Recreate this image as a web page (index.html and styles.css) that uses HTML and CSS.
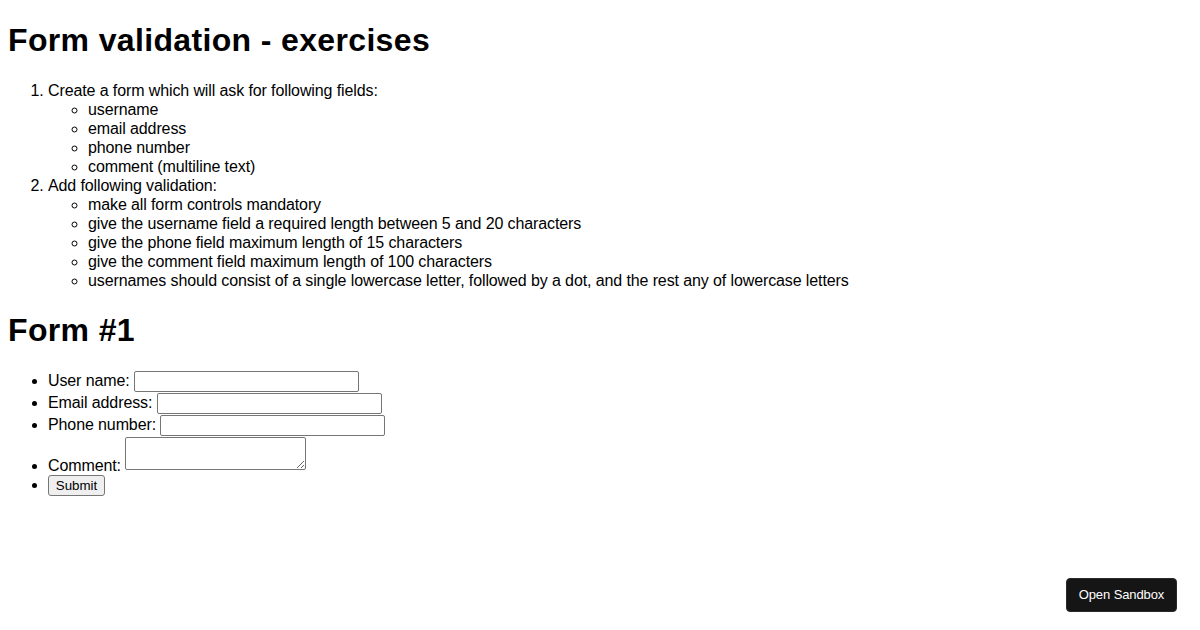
FILE: index.html
```html
<!DOCTYPE html>
<html lang="en">
<head>
<meta charset="utf-8">
<title>Form validation - exercises</title>
<link rel="stylesheet" href="styles.css">
</head>
<body class="page">
<h1 class="title">Form validation - exercises</h1>
<ol class="tasks">
  <li>Create a form which will ask for following fields:
    <ul class="sub">
      <li>username</li>
      <li>email address</li>
      <li>phone number</li>
      <li>comment (multiline text)</li>
    </ul>
  </li>
  <li>Add following validation:
    <ul class="sub">
      <li>make all form controls mandatory</li>
      <li>give the username field a required length between 5 and 20 characters</li>
      <li>give the phone field maximum length of 15 characters</li>
      <li>give the comment field maximum length of 100 characters</li>
      <li>usernames should consist of a single lowercase letter, followed by a dot, and the rest any of lowercase letters</li>
    </ul>
  </li>
</ol>
<h1 class="title">Form #1</h1>
<form class="form">
  <ul class="fields">
    <li>User name: <input class="field" type="text"></li>
    <li>Email address: <input class="field" type="email"></li>
    <li>Phone number: <input class="field" type="tel"></li>
    <li>Comment: <textarea class="area"></textarea></li>
    <li><button class="submit" type="button">Submit</button></li>
  </ul>
</form>
<a class="sandbox" href="#">Open Sandbox</a>
</body>
</html>
```

FILE: styles.css
```css
html {
  margin: 0;
  padding: 0;
}
.page {
  margin: 0;
  padding: 0 8px;
  font-family: "Liberation Sans", Arial, sans-serif;
  font-size: 16px;
  line-height: 19px;
  letter-spacing: -0.11px;
  color: #000;
  background: #fff;
}
.title {
  font-size: 32px;
  line-height: 38px;
  letter-spacing: 0.35px;
  font-weight: bold;
  margin: 21.44px 0;
}
.tasks {
  margin: 16px 0;
  padding-left: 40px;
}
.sub {
  list-style: circle;
  margin: 0;
  padding-left: 40px;
}
.form {
  margin: 0;
}
.fields {
  list-style: disc;
  margin: 16px 0;
  padding-left: 40px;
}
.field {
  font-family: "Liberation Sans", Arial, sans-serif;
  font-size: 13.33px;
  box-sizing: border-box;
  width: 225px;
  height: 21px;
  margin: 0 0 1px;
  border: 1px solid #767676;
  border-radius: 2px;
  padding: 1px 2px;
}
.area {
  box-sizing: border-box;
  width: 181px;
  height: 33px;
  margin: 0 0 1px;
  border: 1px solid #767676;
  border-radius: 2px;
}
.submit {
  font-family: "Liberation Sans", Arial, sans-serif;
  font-size: 13.33px;
  letter-spacing: 0;
  box-sizing: border-box;
  width: 57px;
  height: 21px;
  margin: 0;
  padding: 1px 6px;
  background: #efefef;
  color: #000;
  border: 1px solid #767676;
  border-radius: 3px;
}
.sandbox {
  position: fixed;
  right: 23px;
  bottom: 18px;
  box-sizing: border-box;
  width: 111px;
  height: 34px;
  display: flex;
  align-items: center;
  justify-content: center;
  background: #151515;
  color: #fff;
  border-radius: 4px;
  border: 1px solid #2a2a2a;
  font-family: "Liberation Sans", Arial, sans-serif;
  font-size: 13px;
  letter-spacing: -0.1px;
  line-height: 16px;
  text-decoration: none;
}
```
